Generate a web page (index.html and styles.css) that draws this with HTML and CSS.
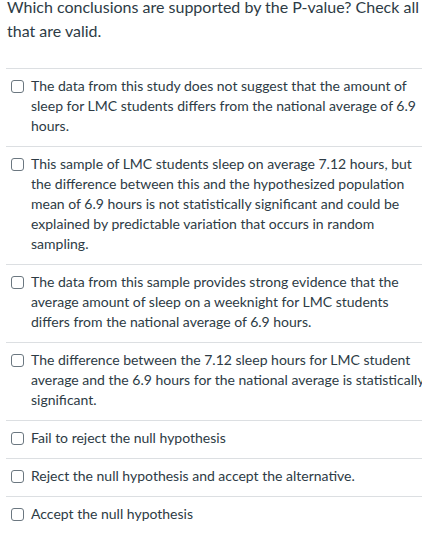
FILE: index.html
```html
<!DOCTYPE html>
<html>
<head>
<meta charset="utf-8">
<link rel="stylesheet" href="styles.css">
</head>
<body>
<div class="question">
  <div class="prompt">Which conclusions are supported by the P-value? Check all that are valid.</div>
  <ul class="answers">
    <li class="answer"><span class="box"></span><span class="label">The data from this study does not suggest that the amount of sleep for LMC students differs from the national average of 6.9 hours.</span></li>
    <li class="answer"><span class="box"></span><span class="label">This sample of LMC students sleep on average 7.12 hours, but the difference between this and the hypothesized population mean of 6.9 hours is not statistically significant and could be explained by predictable variation that occurs in random sampling.</span></li>
    <li class="answer"><span class="box"></span><span class="label">The data from this sample provides strong evidence that the average amount of sleep on a weeknight for LMC students differs from the national average of 6.9 hours.</span></li>
    <li class="answer"><span class="box"></span><span class="label">The difference between the 7.12 sleep hours for LMC student average and the 6.9 hours for the national average is statistically significant.</span></li>
    <li class="answer"><span class="box"></span><span class="label">Fail to reject the null hypothesis</span></li>
    <li class="answer"><span class="box"></span><span class="label">Reject the null hypothesis and accept the alternative.</span></li>
    <li class="answer"><span class="box"></span><span class="label">Accept the null hypothesis</span></li>
  </ul>
</div>
</body>
</html>
```

FILE: styles.css
```css
html, body {
  margin: 0;
  padding: 0;
  background: #fff;
  overflow: hidden;
}
body {
  font-family: Lato, "Open Sans", sans-serif;
  color: #2d3b45;
}
.question {
  width: 422px;
  padding-left: 6px;
}
.prompt {
  font-size: 16px;
  line-height: 24px;
  margin-top: -5px;
  padding-left: 1px;
  padding-bottom: 25px;
}
.answers {
  list-style: none;
  margin: 0;
  padding: 0;
}
.answer {
  display: flex;
  align-items: flex-start;
  border-top: 1px solid #dcdfe2;
  padding: 7px 0 10px 5px;
  font-size: 14px;
  line-height: 20px;
}
.box {
  flex: none;
  width: 11px;
  height: 11px;
  border: 1px solid #6b7780;
  border-radius: 3px;
  margin-top: 4px;
  margin-right: 7px;
}
.label {
  flex: 1;
}
```
